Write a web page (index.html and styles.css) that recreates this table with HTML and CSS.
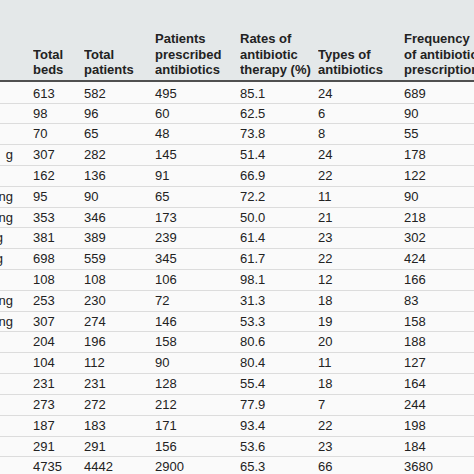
FILE: index.html
```html
<!DOCTYPE html>
<html>
<head>
<meta charset="utf-8">
<link rel="stylesheet" href="styles.css">
</head>
<body>
<div class="frame">
<table class="data">
<colgroup>
<col class="w-name"><col class="w-beds"><col class="w-pat"><col class="w-pres"><col class="w-rate"><col class="w-type"><col class="w-freq">
</colgroup>
<thead>
<tr><th></th><th>Total beds</th><th>Total patients</th><th>Patients prescribed antibiotics</th><th>Rates of antibiotic therapy (%)</th><th>Types of antibiotics</th><th>Frequency of antibiotic prescriptions</th></tr>
</thead>
<tbody>
<tr class="first"><td><div class="clip"></div></td><td>613</td><td>582</td><td>495</td><td>85.1</td><td>24</td><td>689</td></tr>
<tr><td><div class="clip"></div></td><td>98</td><td>96</td><td>60</td><td>62.5</td><td>6</td><td>90</td></tr>
<tr><td><div class="clip"></div></td><td>70</td><td>65</td><td>48</td><td>73.8</td><td>8</td><td>55</td></tr>
<tr><td><div class="clip"><span>g</span></div></td><td>307</td><td>282</td><td>145</td><td>51.4</td><td>24</td><td>178</td></tr>
<tr><td><div class="clip"></div></td><td>162</td><td>136</td><td>91</td><td>66.9</td><td>22</td><td>122</td></tr>
<tr><td><div class="clip"><span>ng</span></div></td><td>95</td><td>90</td><td>65</td><td>72.2</td><td>11</td><td>90</td></tr>
<tr><td><div class="clip"><span>ng</span></div></td><td>353</td><td>346</td><td>173</td><td>50.0</td><td>21</td><td>218</td></tr>
<tr><td><div class="clip far"><span>ng</span></div></td><td>381</td><td>389</td><td>239</td><td>61.4</td><td>23</td><td>302</td></tr>
<tr><td><div class="clip far"><span>ng</span></div></td><td>698</td><td>559</td><td>345</td><td>61.7</td><td>22</td><td>424</td></tr>
<tr><td><div class="clip"></div></td><td>108</td><td>108</td><td>106</td><td>98.1</td><td>12</td><td>166</td></tr>
<tr><td><div class="clip"><span>ng</span></div></td><td>253</td><td>230</td><td>72</td><td>31.3</td><td>18</td><td>83</td></tr>
<tr><td><div class="clip"><span>ng</span></div></td><td>307</td><td>274</td><td>146</td><td>53.3</td><td>19</td><td>158</td></tr>
<tr><td><div class="clip"></div></td><td>204</td><td>196</td><td>158</td><td>80.6</td><td>20</td><td>188</td></tr>
<tr><td><div class="clip"></div></td><td>104</td><td>112</td><td>90</td><td>80.4</td><td>11</td><td>127</td></tr>
<tr><td><div class="clip"></div></td><td>231</td><td>231</td><td>128</td><td>55.4</td><td>18</td><td>164</td></tr>
<tr><td><div class="clip"></div></td><td>273</td><td>272</td><td>212</td><td>77.9</td><td>7</td><td>244</td></tr>
<tr><td><div class="clip"></div></td><td>187</td><td>183</td><td>171</td><td>93.4</td><td>22</td><td>198</td></tr>
<tr><td><div class="clip"></div></td><td>291</td><td>291</td><td>156</td><td>53.6</td><td>23</td><td>184</td></tr>
<tr><td><div class="clip"></div></td><td>4735</td><td>4442</td><td>2900</td><td>65.3</td><td>66</td><td>3680</td></tr>
</tbody>
</table>
</div>
</body>
</html>
```
FILE: styles.css
```css
html, body {
  margin: 0;
  padding: 0;
  background: #fafafa;
}
.frame {
  width: 474px;
  height: 474px;
  overflow: hidden;
}
.data {
  border-collapse: separate;
  border-spacing: 0;
  table-layout: fixed;
  width: 482px;
  font-family: "Liberation Sans", Arial, Helvetica, sans-serif;
  font-size: 13px;
  color: #222;
}
.w-name { width: 33px; }
.w-beds { width: 51px; }
.w-pat { width: 71px; }
.w-pres { width: 85px; }
.w-rate { width: 78px; }
.w-type { width: 86px; }
.w-freq { width: 78px; }
.data th {
  background: #e4e8e9;
  height: 78px;
  padding: 0 0 2px 0;
  vertical-align: bottom;
  text-align: left;
  font-weight: bold;
  line-height: 15.6px;
  border-bottom: 2px solid #505050;
  overflow: hidden;
  white-space: normal;
}
.data td {
  height: 19.82px;
  padding: 0;
  line-height: 19.82px;
  text-align: left;
  vertical-align: middle;
  border-bottom: 1px solid #dcdcdc;
  white-space: nowrap;
}
.data tr.first td {
  height: 16.5px;
  line-height: 16.5px;
  padding-top: 4px;
}
.clip {
  display: flex;
  justify-content: flex-end;
  overflow: hidden;
  padding-right: 20px;
  height: 19.82px;
}
.data tr.first .clip {
  height: 16.5px;
}
.clip span {
  flex: none;
}
.clip.far {
  padding-right: 30px;
}
```
